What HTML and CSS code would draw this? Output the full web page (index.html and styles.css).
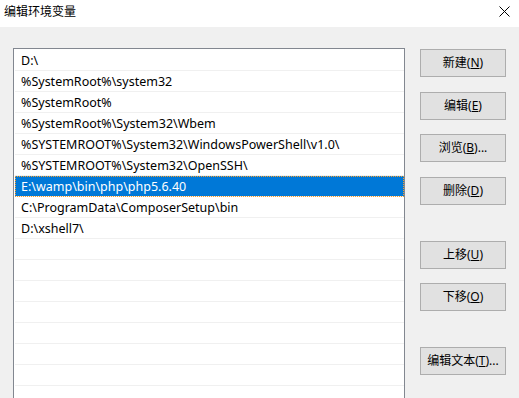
FILE: index.html
```html
<!DOCTYPE html>
<html lang="zh-CN">
<head>
<meta charset="utf-8">
<title>编辑环境变量</title>
<link rel="stylesheet" href="styles.css">
</head>
<body>
<div class="window">
  <div class="titlebar">
    <span class="title">编辑环境变量</span>
    <svg class="close" width="11" height="11" viewBox="0 0 11 11" aria-hidden="true">
      <path d="M0.5 0.5 L10.5 10.5 M10.5 0.5 L0.5 10.5" stroke="#000" stroke-width="1" fill="none"/>
    </svg>
  </div>
  <div class="content">
    <div class="list">
      <div class="row">D:\</div>
      <div class="row">%SystemRoot%\system32</div>
      <div class="row">%SystemRoot%</div>
      <div class="row">%SystemRoot%\System32\Wbem</div>
      <div class="row">%SYSTEMROOT%\System32\WindowsPowerShell\v1.0\</div>
      <div class="row">%SYSTEMROOT%\System32\OpenSSH\</div>
      <div class="row selected">E:\wamp\bin\php\php5.6.40</div>
      <div class="row">C:\ProgramData\ComposerSetup\bin</div>
      <div class="row">D:\xshell7\</div>
      <div class="row"></div>
      <div class="row"></div>
      <div class="row"></div>
      <div class="row"></div>
      <div class="row"></div>
      <div class="row"></div>
      <div class="row"></div>
      <div class="row"></div>
    </div>
    <div class="buttons">
      <button class="btn">新建(<u>N</u>)</button>
      <button class="btn">编辑(<u>E</u>)</button>
      <button class="btn">浏览(<u>B</u>)...</button>
      <button class="btn">删除(<u>D</u>)</button>
      <button class="btn far">上移(<u>U</u>)</button>
      <button class="btn">下移(<u>O</u>)</button>
      <button class="btn far">编辑文本(<u>T</u>)...</button>
    </div>
  </div>
</div>
</body>
</html>
```
FILE: styles.css
```css
html, body {
  margin: 0;
  padding: 0;
  width: 519px;
  height: 398px;
  overflow: hidden;
  background: #f0f0f0;
}
body {
  font-family: "Noto Sans", "Noto Sans CJK SC", sans-serif;
  font-size: 12px;
  color: #000;
}
.window {
  display: flex;
  flex-direction: column;
  height: 398px;
  overflow: hidden;
}
.titlebar {
  height: 27px;
  flex-shrink: 0;
  box-sizing: border-box;
  background: #fff;
  display: flex;
  align-items: center;
  justify-content: space-between;
  padding: 0 9px 0 4px;
}
.title {
  font-size: 12px;
  line-height: 14px;
  margin-top: -3px;
}
.close {
  display: block;
  margin-top: -4px;
}
.content {
  display: flex;
  flex: 1;
  min-height: 0;
  padding: 21px 0 0 13px;
  gap: 15px;
}
.list {
  width: 392px;
  height: 350px;
  box-sizing: border-box;
  border: 1px solid #828790;
  border-bottom: 0;
  background: #fff;
  padding: 1px 0 0 1px;
  overflow: hidden;
  flex-shrink: 0;
}
.row {
  height: 20px;
  line-height: 21px;
  font-size: 12.5px;
  border-bottom: 1px solid #f0f0f0;
  padding-left: 6px;
  white-space: nowrap;
  box-sizing: content-box;
}
.row.selected {
  background: #0078d7;
  color: #fff;
  outline: 1px dotted #f7a030;
  outline-offset: -1px;
}
.buttons {
  display: flex;
  flex-direction: column;
  padding-top: 1px;
}
.btn {
  width: 86px;
  height: 28px;
  box-sizing: border-box;
  border: 1px solid #adadad;
  background: #e1e1e1;
  font-family: "Noto Sans", "Noto Sans CJK SC", sans-serif;
  font-size: 12px;
  color: #000;
  padding: 0;
  margin: 0 0 15px 0;
  line-height: 24px;
}
.btn:nth-child(2) { margin-bottom: 14px; }
.btn:nth-child(5) { margin-bottom: 14px; }
.btn.far { margin-top: 21px; }
.btn u { text-underline-offset: 1px; }
```
